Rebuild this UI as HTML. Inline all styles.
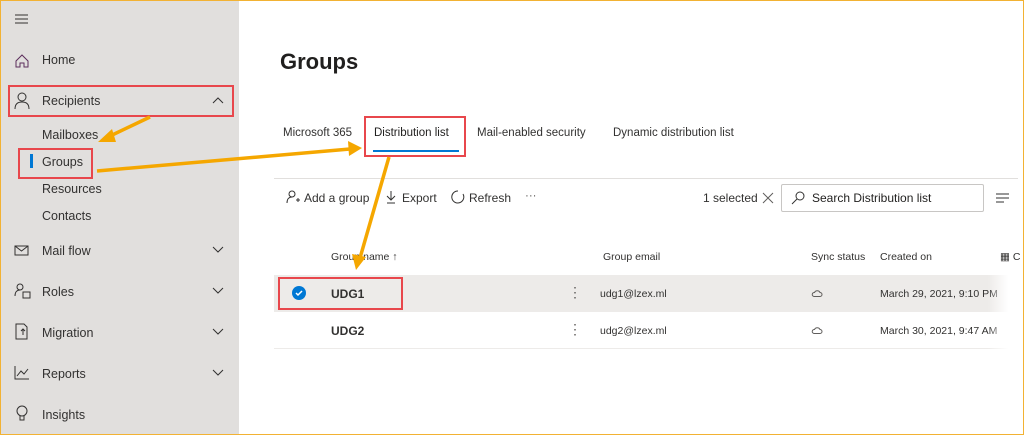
<!DOCTYPE html>
<html><head><style>
*{margin:0;padding:0;box-sizing:border-box}
body{width:1024px;height:435px;overflow:hidden;font-family:"Liberation Sans",sans-serif;background:#fff;position:relative;color:#323130}
.frame{position:absolute;inset:0;border:1px solid #f2b233;z-index:5;pointer-events:none}
.side{position:absolute;left:0;top:0;width:239px;height:435px;background:#e1dfdd}
.t{position:absolute;font-size:12.5px;white-space:nowrap}
.ic{position:absolute}
.rb{position:absolute;border:2px solid #e8474c}
.main .t{font-size:11.5px}
</style></head><body>
<div class="side">
<svg class="ic" style="left:14px;top:13px" width="16" height="12"><path d="M1 2h13M1 6h13M1 10h13" stroke="#323130" stroke-width="1"/></svg>
<svg class="ic" style="left:14px;top:53px" width="16" height="16"><path d="M2 8L8 2l6 6v6H10v-4H6v4H2z" stroke="#5c2e5c" fill="none"/></svg>
<div class="t" style="left:42px;top:53px">Home</div>
<svg class="ic" style="left:14px;top:92px" width="16" height="18"><circle cx="8" cy="5" r="4" stroke="#323130" fill="none"/><path d="M1 17c0-5 3-7 7-7s7 2 7 7" stroke="#323130" fill="none"/></svg>
<div class="t" style="left:42px;top:94px">Recipients</div>
<svg class="ic" style="left:212px;top:96px" width="12" height="8"><path d="M1 7l5-5 5 5" stroke="#323130" fill="none"/></svg>
<div class="rb" style="left:8px;top:85px;width:226px;height:32px"></div>
<div class="t" style="left:42px;top:128px">Mailboxes</div>
<div style="position:absolute;left:30px;top:154px;width:3px;height:14px;background:#0078d4"></div>
<div class="t" style="left:42px;top:155px">Groups</div>
<div class="rb" style="left:18px;top:148px;width:75px;height:31px"></div>
<div class="t" style="left:42px;top:182px">Resources</div>
<div class="t" style="left:42px;top:209px">Contacts</div>
<svg class="ic" style="left:14px;top:245px" width="16" height="12"><rect x="1" y="1" width="13" height="9" stroke="#323130" fill="none"/><path d="M1 1l6.5 5L14 1" stroke="#323130" fill="none"/></svg>
<div class="t" style="left:42px;top:244px">Mail flow</div>
<svg class="ic" style="left:14px;top:283px" width="18" height="16"><circle cx="6" cy="4" r="3" stroke="#323130" fill="none"/><path d="M1 13c0-4 2-6 5-6" stroke="#323130" fill="none"/><rect x="9" y="9" width="7" height="6" stroke="#323130" fill="none"/></svg>
<div class="t" style="left:42px;top:285px">Roles</div>
<svg class="ic" style="left:14px;top:323px" width="16" height="18"><path d="M2 1h8l3 3v12H2z" stroke="#323130" fill="none"/><path d="M9 6v6M7 8l2-2 2 2" stroke="#323130" fill="none"/></svg>
<div class="t" style="left:42px;top:326px">Migration</div>
<svg class="ic" style="left:14px;top:365px" width="16" height="16"><path d="M1 1v13h14M3 11l4-5 3 3 4-5" stroke="#323130" fill="none"/></svg>
<div class="t" style="left:42px;top:367px">Reports</div>
<svg class="ic" style="left:15px;top:405px" width="14" height="18"><circle cx="7" cy="6" r="5" stroke="#323130" fill="none"/><path d="M5 11v4h4v-4" stroke="#323130" fill="none"/></svg>
<div class="t" style="left:42px;top:408px">Insights</div>
<svg class="ic" style="left:212px;top:246px" width="12" height="130"><path d="M1 1l5 5 5-5M1 42l5 5 5-5M1 83l5 5 5-5M1 124l5 5 5-5" stroke="#323130" fill="none"/></svg>
</div>
<div class="main">
<div class="t" style="left:280px;top:49px;font-size:22px;font-weight:bold;color:#201f1e">Groups</div>
<div class="t" style="left:283px;top:127px">Microsoft 365</div>
<div class="t" style="left:374px;top:127px;color:#201f1e">Distribution list</div>
<div style="position:absolute;left:373px;top:150px;width:86px;height:2px;background:#0078d4"></div>
<div class="rb" style="left:364px;top:116px;width:102px;height:41px"></div>
<div class="t" style="left:477px;top:127px">Mail-enabled security</div>
<div class="t" style="left:613px;top:127px">Dynamic distribution list</div>
<div style="position:absolute;left:274px;top:178px;width:744px;height:1px;background:#e1dfdd"></div>
<svg class="ic" style="left:286px;top:190px" width="14" height="14"><circle cx="6" cy="4" r="3" stroke="#323130" fill="none"/><path d="M1 13c0-4 2-6 5-6M10 10h4M12 8v4" stroke="#323130" fill="none"/></svg>
<div class="t" style="left:304px;top:191px;font-size:12px">Add a group</div>
<svg class="ic" style="left:386px;top:190px" width="10" height="14"><path d="M5 1v9M1 6l4 4 4-4M1 13h8" stroke="#323130" fill="none"/></svg>
<div class="t" style="left:402px;top:191px;font-size:12px">Export</div>
<svg class="ic" style="left:451px;top:190px" width="14" height="14"><path d="M7 1A6 6 0 1 0 12 4" stroke="#323130" fill="none"/></svg>
<div class="t" style="left:469px;top:191px;font-size:12px">Refresh</div>
<div class="t" style="left:525px;top:190px;color:#605e5c">···</div>
<div class="t" style="left:703px;top:191px;font-size:12px">1 selected</div>
<svg class="ic" style="left:762px;top:192px" width="12" height="12"><path d="M1 1l10 10M11 1L1 11" stroke="#605e5c" fill="none"/></svg>
<div style="position:absolute;left:781px;top:184px;width:203px;height:28px;border:1px solid #c8c6c4;border-radius:2px"></div>
<svg class="ic" style="left:791px;top:191px" width="14" height="14"><circle cx="9" cy="5" r="4" stroke="#323130" fill="none"/><path d="M6 8l-5 5" stroke="#323130"/></svg>
<div class="t" style="left:812px;top:191px;color:#201f1e;font-size:12px">Search Distribution list</div>
<svg class="ic" style="left:996px;top:193px" width="14" height="10"><path d="M0 1h13M0 5h13M0 9h8" stroke="#323130"/></svg>
<div class="t" style="left:331px;top:251px;font-size:10.5px">Group name ↑</div>
<div class="t" style="left:603px;top:251px;font-size:10.5px">Group email</div>
<div class="t" style="left:811px;top:251px;font-size:10.5px">Sync status</div>
<div class="t" style="left:880px;top:251px;font-size:10.5px">Created on</div>
<div class="t" style="left:1000px;top:251px;font-size:10.5px">▦ C</div>
<div style="position:absolute;left:274px;top:275px;width:748px;height:37px;background:#edebe9"></div>
<div style="position:absolute;left:274px;top:348px;width:748px;height:1px;background:#edebe9"></div>
<div style="position:absolute;left:292px;top:286px;width:14px;height:14px;border-radius:50%;background:#0078d4"></div>
<svg class="ic" style="left:292px;top:286px" width="14" height="14"><path d="M4 7l2 2 4-4" stroke="#fff" stroke-width="1.5" fill="none"/></svg>
<div class="t" style="left:331px;top:287px;font-weight:bold;font-size:12px">UDG1</div>
<div class="rb" style="left:278px;top:277px;width:125px;height:33px"></div>
<div class="t" style="left:331px;top:324px;font-weight:bold;font-size:12px">UDG2</div>
<div class="t" style="left:568px;top:284px;font-size:14px;color:#605e5c">⋮</div>
<div class="t" style="left:568px;top:321px;font-size:14px;color:#605e5c">⋮</div>
<div class="t" style="left:600px;top:288px;font-size:10.5px">udg1@lzex.ml</div>
<div class="t" style="left:600px;top:325px;font-size:10.5px">udg2@lzex.ml</div>
<svg class="ic" style="left:811px;top:289px" width="12" height="9"><path d="M3 7.5h6a2 2 0 0 0 0-4A3 3 0 0 0 3.5 3.5 2 2 0 0 0 3 7.5z" stroke="#605e5c" fill="none"/></svg>
<svg class="ic" style="left:811px;top:326px" width="12" height="9"><path d="M3 7.5h6a2 2 0 0 0 0-4A3 3 0 0 0 3.5 3.5 2 2 0 0 0 3 7.5z" stroke="#605e5c" fill="none"/></svg>
<div class="t" style="left:880px;top:288px;font-size:10.5px">March 29, 2021, 9:10 PM</div>
<div class="t" style="left:880px;top:325px;font-size:10.5px">March 30, 2021, 9:47 AM</div>
<div style="position:absolute;left:988px;top:275px;width:34px;height:80px;background:linear-gradient(90deg,rgba(255,255,255,0),#fff 60%)"></div>
</div>
<svg style="position:absolute;left:0;top:0;z-index:4" width="1024" height="435">
<g stroke="#f5a700" stroke-width="3.5" fill="#f5a700">
<line x1="150" y1="117" x2="108" y2="137"/><polygon points="98,142 112,129 116,142" stroke="none"/>
<line x1="97" y1="171" x2="350" y2="149"/><polygon points="362,148 348,141 349,156" stroke="none"/>
<line x1="389" y1="157" x2="360" y2="258"/><polygon points="356,270 352,254 366,257" stroke="none"/>
</g></svg>
<div class="frame"></div>
</body></html>
